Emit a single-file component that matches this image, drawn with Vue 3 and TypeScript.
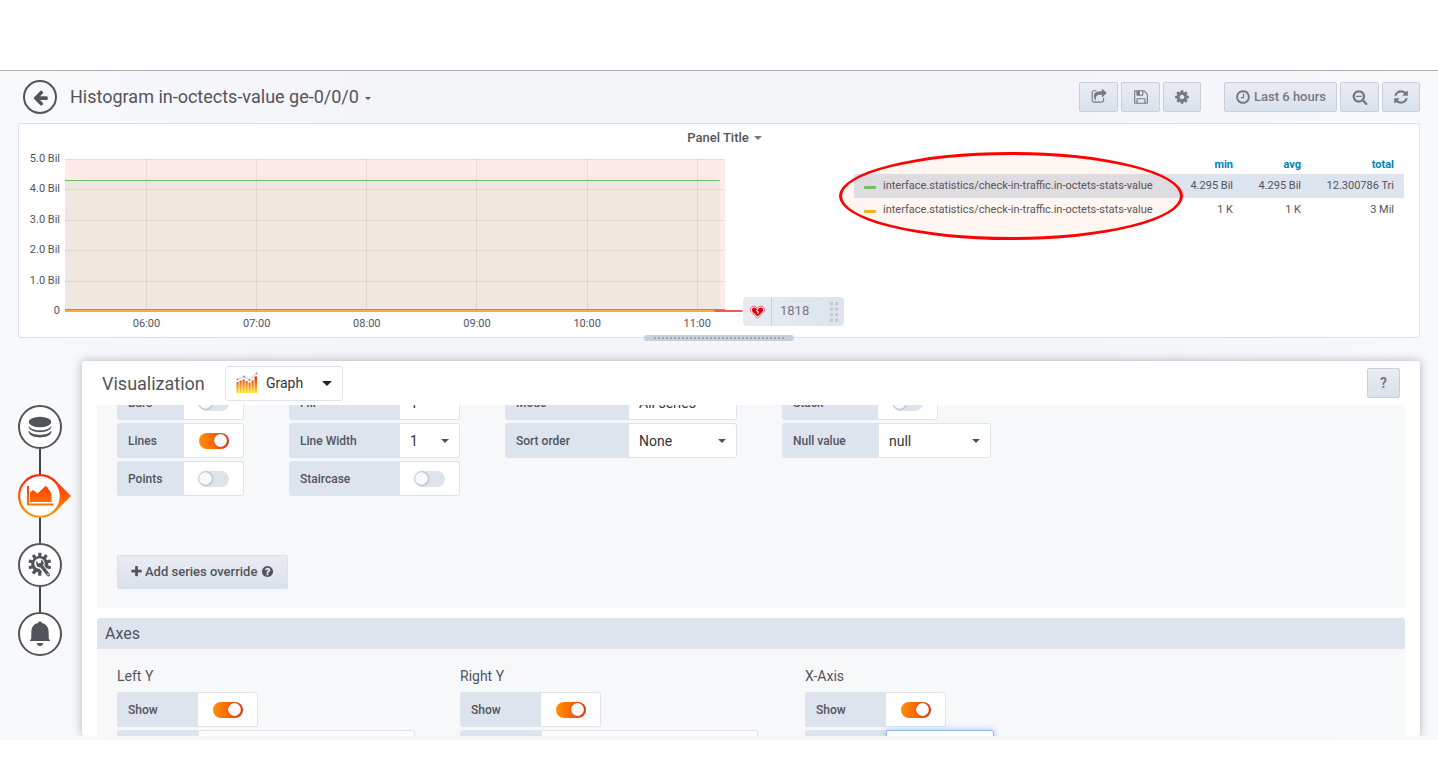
<script setup lang="ts">
import { ref } from 'vue'

interface Series {
  name: string
  color: string
  min: string
  avg: string
  total: string
  active: boolean
}

const series: Series[] = [
  { name: 'interface.statistics/check-in-traffic.in-octets-stats-value', color: '#73bf69', min: '4.295 Bil', avg: '4.295 Bil', total: '12.300786 Tri', active: true },
  { name: 'interface.statistics/check-in-traffic.in-octets-stats-value', color: '#f2b71f', min: '1 K', avg: '1 K', total: '3 Mil', active: false },
]

const yTicks = [
  { label: '5.0 Bil', y: 0 },
  { label: '4.0 Bil', y: 30 },
  { label: '3.0 Bil', y: 61 },
  { label: '2.0 Bil', y: 91 },
  { label: '1.0 Bil', y: 122 },
  { label: '0', y: 152 },
]

const xTicks = ['06:00', '07:00', '08:00', '09:00', '10:00', '11:00'].map((label, i) => ({
  label,
  x: `${(12.35 + i * 16.69).toFixed(2)}%`,
}))

const bars = ref(false)
const lines = ref(true)
const points = ref(false)
const staircase = ref(false)
const stack = ref(false)
const fill = ref('1')
const lineWidth = ref('1')
const hoverMode = ref('All series')
const sortOrder = ref('None')
const nullValue = ref('null')
const leftShow = ref(true)
const rightShow = ref(true)
const xShow = ref(true)
const leftUnit = ref('short')
const rightUnit = ref('short')
const xMode = ref('Time')

const icons = {
  back: 'M1664 896v128q0 53-32.5 90.5t-84.5 37.5h-704l293 294q38 36 38 90t-38 90l-75 76q-37 37-90 37-52 0-91-37l-651-652q-37-37-37-90 0-52 37-91l651-650q38-38 91-38 52 0 90 38l75 74q38 38 38 91t-38 91l-293 293h704q52 0 84.5 37.5t32.5 90.5z',
  share: 'M1472 989v259q0 119-84.5 203.5t-203.5 84.5h-832q-119 0-203.5-84.5t-84.5-203.5v-832q0-119 84.5-203.5t203.5-84.5h255q13 0 22.5 9.5t9.5 22.5q0 27-26 32-77 26-133 60-10 4-16 4h-112q-66 0-113 47t-47 113v832q0 66 47 113t113 47h832q66 0 113-47t47-113v-214q0-19 18-29 28-13 54-37 16-16 35-8 21 9 21 29zm237-496l-384 384q-18 19-45 19-12 0-25-5-39-17-39-59v-192h-160q-323 0-438 131-119 137-74 473 3 23-20 34-8 2-12 2-16 0-26-13-10-14-21-31t-39.5-68.5-49.5-99.5-38.5-114-17.5-122q0-49 3.5-91t14-90 28-88 47-81.5 68.5-74 94.5-61.5 124.5-48.5 159.5-30.5 196.5-11h160v-192q0-42 39-59 13-5 25-5 26 0 45 19l384 384q19 19 19 45t-19 45z',
  save: 'M512 1536h768v-384h-768v384zm896 0h128v-896q0-14-10-38.5t-20-34.5l-281-281q-10-10-34-20t-39-10v416q0 40-28 68t-68 28h-576q-40 0-68-28t-28-68v-416h-128v1280h128v-416q0-40 28-68t68-28h832q40 0 68 28t28 68v416zm-384-928v-320q0-13-9.5-22.5t-22.5-9.5h-192q-13 0-22.5 9.5t-9.5 22.5v320q0 13 9.5 22.5t22.5 9.5h192q13 0 22.5-9.5t9.5-22.5zm640 32v928q0 40-28 68t-68 28h-1344q-40 0-68-28t-28-68v-1344q0-40 28-68t68-28h928q40 0 88 20t76 48l280 280q28 28 48 76t20 88z',
  cog: 'M1152 896q0-106-75-181t-181-75-181 75-75 181 75 181 181 75 181-75 75-181zm512-109v222q0 12-8 23t-20 13l-185 28q-19 54-39 91 35 50 107 138 10 12 10 25t-9 23q-27 37-99 108t-94 71q-12 0-26-9l-138-108q-44 23-91 38-16 136-29 186-7 28-36 28h-222q-14 0-24.5-8.5t-11.5-21.5l-28-184q-49-16-90-37l-141 107q-10 9-25 9-14 0-25-11-126-114-165-168-7-10-7-23 0-12 8-23 15-21 51-66.5t54-70.5q-27-50-41-99l-183-27q-13-2-21-12.5t-8-23.5v-222q0-12 8-23t19-13l186-28q14-46 39-92-40-57-107-138-10-12-10-24 0-10 9-23 26-36 98.5-107.5t94.5-71.5q13 0 26 10l138 107q44-23 91-38 16-136 29-186 7-28 36-28h222q14 0 24.5 8.5t11.5 21.5l28 184q49 16 90 37l142-107q9-9 24-9 13 0 25 10 129 119 165 170 7 8 7 22 0 12-8 23-15 21-51 66.5t-54 70.5q26 50 41 98l183 28q13 2 21 12.5t8 23.5z',
  clock: 'M1024 544v448q0 14-9 23t-23 9h-320q-14 0-23-9t-9-23v-64q0-14 9-23t23-9h224v-352q0-14 9-23t23-9h64q14 0 23 9t9 23zm416 352q0-148-73-273t-198-198-273-73-273 73-198 198-73 273 73 273 198 198 273 73 273-73 198-198 73-273zm224 0q0 209-103 385.5t-279.5 279.5-385.5 103-385.5-103-279.5-279.5-103-385.5 103-385.5 279.5-279.5 385.5-103 385.5 103 279.5 279.5 103 385.5z',
  zoomOut: 'M1088 800v64q0 13-9.5 22.5t-22.5 9.5h-576q-13 0-22.5-9.5t-9.5-22.5v-64q0-13 9.5-22.5t22.5-9.5h576q13 0 22.5 9.5t9.5 22.5zm128 32q0-185-131.5-316.5t-316.5-131.5-316.5 131.5-131.5 316.5 131.5 316.5 316.5 131.5 316.5-131.5 131.5-316.5zm512 832q0 53-37.5 90.5t-90.5 37.5q-54 0-90-38l-343-342q-179 124-399 124-143 0-273.5-55.5t-225-150-150-225-55.5-273.5 55.5-273.5 150-225 225-150 273.5-55.5 273.5 55.5 225 150 150 225 55.5 273.5q0 220-124 399l343 343q37 37 37 90z',
  refresh: 'M1639 1056q0 5-1 7-64 268-268 434.5t-478 166.5q-146 0-282.5-55t-243.5-157l-129 129q-19 19-45 19t-45-19-19-45v-448q0-26 19-45t45-19h448q26 0 45 19t19 45-19 45l-137 137q71 66 161 102t187 36q134 0 250-65t186-179q11-17 53-117 8-23 30-23h192q13 0 22.5 9.5t9.5 22.5zm25-800v448q0 26-19 45t-45 19h-448q-26 0-45-19t-19-45 19-45l138-138q-148-137-349-137-134 0-250 65t-186 179q-11 17-53 117-8 23-30 23h-199q-13 0-22.5-9.5t-9.5-22.5v-7q65-268 270-434.5t480-166.5q146 0 284 55.5t245 156.5l130-129q19-19 45-19t45 19 19 45z',
  plus: 'M1600 736v192q0 40-28 68t-68 28h-416v416q0 40-28 68t-68 28h-192q-40 0-68-28t-28-68v-416h-416q-40 0-68-28t-28-68v-192q0-40 28-68t68-28h416v-416q0-40 28-68t68-28h192q40 0 68 28t28 68v416h416q40 0 68 28t28 68z',
  help: 'M1024 1376v-192q0-14-9-23t-23-9h-192q-14 0-23 9t-9 23v192q0 14 9 23t23 9h192q14 0 23-9t9-23zm256-672q0-88-55.5-163t-138.5-116-170-41q-243 0-371 213-15 24 8 42l132 100q7 6 19 6 16 0 25-12 53-68 86-92 34-24 86-24 48 0 85.5 26t37.5 59q0 38-20 61t-68 45q-63 28-115.5 86.5t-52.5 125.5v36q0 14 9 23t23 9h192q14 0 23-9t9-23q0-19 21.5-49.5t54.5-49.5q32-18 49-28.5t46-35 44.5-48 28-60.5 12.5-81zm384 192q0 209-103 385.5t-279.5 279.5-385.5 103-385.5-103-279.5-279.5-103-385.5 103-385.5 279.5-279.5 385.5-103 385.5 103 279.5 279.5 103 385.5z',
}

const gearTeeth = Array.from({ length: 10 }, (_, i) => i * 36)
</script>

<template>
  <div class="page">
    <div class="app">
      <header class="navbar">
        <button class="back" type="button" aria-label="Go back">
          <svg width="17" height="17" viewBox="0 0 1792 1792"><path :d="icons.back" /></svg>
        </button>
        <button class="dash-title" type="button">
          Histogram in-octects-value ge-0/0/0
          <span class="caret small"></span>
        </button>
        <div class="nav-buttons">
          <div class="btn-group">
            <button class="nav-btn" type="button" aria-label="Share dashboard"><svg width="16" height="16" viewBox="0 0 1792 1792"><path :d="icons.share" /></svg></button>
            <button class="nav-btn" type="button" aria-label="Save dashboard"><svg width="16" height="16" viewBox="0 0 1792 1792"><path :d="icons.save" /></svg></button>
            <button class="nav-btn" type="button" aria-label="Dashboard settings"><svg width="16" height="16" viewBox="0 0 1792 1792"><path :d="icons.cog" /></svg></button>
          </div>
          <div class="btn-group">
            <button class="nav-btn time" type="button"><svg width="16" height="16" viewBox="0 0 1792 1792"><path :d="icons.clock" /></svg>Last 6 hours</button>
            <button class="nav-btn" type="button" aria-label="Zoom out"><svg width="16" height="16" viewBox="0 0 1792 1792"><path :d="icons.zoomOut" /></svg></button>
            <button class="nav-btn" type="button" aria-label="Refresh"><svg width="16" height="16" viewBox="0 0 1792 1792"><path :d="icons.refresh" /></svg></button>
          </div>
        </div>
      </header>

      <section class="panel">
        <button class="panel-title" type="button">Panel Title<span class="caret grey"></span></button>
        <div class="panel-body">
          <div class="graph">
            <svg class="plot" role="img" aria-label="Octets over time">
              <rect x="0" y="0" width="100%" height="152" fill="#ffeaea" />
              <rect x="0" y="22" width="99.2%" height="130" fill="#f0e7de" />
              <g class="grid">
                <line v-for="t in yTicks.slice(0, 5)" :key="t.label" x1="0" x2="100%" :y1="t.y" :y2="t.y" />
                <line v-for="t in xTicks" :key="t.label" :x1="t.x" :x2="t.x" y1="0" y2="152" />
              </g>
              <rect x="0" y="21" width="99.2%" height="1" fill="#6cbf66" />
              <rect x="0" y="150" width="100%" height="1" fill="#f2703c" />
              <rect x="0" y="151" width="100%" height="2" fill="#f9ab3c" />
              <rect x="98.4%" y="151" width="28" height="2" fill="#f65a55" />
              <text v-for="t in yTicks" :key="t.label" x="-5" :y="t.y + 3" text-anchor="end">{{ t.label }}</text>
              <text v-for="t in xTicks" :key="t.label" :x="t.x" y="168" text-anchor="middle">{{ t.label }}</text>
            </svg>
            <div class="threshold">
              <span class="heart">
                <svg width="15" height="14" viewBox="0 0 15 14">
                  <path d="M7.5 13 1.6 7.4C-.3 5.4.4 2 3 1.3 5 .8 6.6 1.7 7.5 3.2 8.4 1.7 10 .8 12 1.3c2.6.7 3.3 4.1 1.4 6.1z" fill="#fff" stroke="#e5606a" />
                  <path d="M7.5 11.600 2.700 7C1.300 5.500 1.800 3.100 3.600 2.600 5.200 2.200 6.600 3.200 7.500 4.800 8.400 3.200 9.800 2.200 11.400 2.600c1.800.5 2.300 2.900.9 4.400z" fill="#d8000f" />
                  <path d="M7.800 3.500 6.700 6.200l1.800.6-1 2.200" fill="none" stroke="#fff" />
                </svg>
              </span>
              <span class="threshold-value">1818</span>
              <svg class="grip" width="8" height="20" viewBox="0 0 8 20">
                <g fill="#c5c8cc">
                  <template v-for="r in [0, 1, 2, 3]" :key="r">
                    <rect x="0" :y="r * 5.6" width="3" height="3" />
                    <rect x="5" :y="r * 5.6" width="3" height="3" />
                  </template>
                </g>
              </svg>
            </div>
          </div>
          <div class="legend">
            <table>
              <thead>
                <tr><th class="name"></th><th>min</th><th>avg</th><th class="total">total</th></tr>
              </thead>
              <tbody>
                <tr v-for="(s, i) in series" :key="i" :class="{ active: s.active }">
                  <td class="name"><span class="swatch" :style="{ background: s.color }"></span>{{ s.name }}</td>
                  <td>{{ s.min }}</td>
                  <td>{{ s.avg }}</td>
                  <td class="total">{{ s.total }}</td>
                </tr>
              </tbody>
            </table>
            <div class="highlight"></div>
          </div>
        </div>
        <div class="resizer"><span></span></div>
      </section>

      <div class="editor">
        <nav class="tabs" aria-label="Panel editor">
          <button class="tab" type="button" aria-label="Queries">
            <svg width="24" height="24" viewBox="0 0 24 24" fill="#52545c">
              <ellipse cx="12" cy="7" rx="11.3" ry="5.2" />
              <path d="M.7 11c2 3.200 6 4.300 11.300 4.300S21.300 14.200 23.300 11v1.300c-1.300 3.400-6 4.900-11.300 4.900S2 15.700.7 12.300zM.7 15.500c2 3.200 6 4.300 11.300 4.300s9.300-1.100 11.300-4.300v2c-1.300 3.400-6 4.900-11.300 4.900S2 20.900.7 17.500z" />
            </svg>
          </button>
          <button class="tab active" type="button" aria-label="Visualization">
            <svg width="53" height="44" viewBox="0 0 53 44">
              <defs>
                <linearGradient id="hot" x1="0" y1="0" x2="0" y2="44" gradientUnits="userSpaceOnUse">
                  <stop offset="0" stop-color="#ff1f0a" />
                  <stop offset="1" stop-color="#ff9a00" />
                </linearGradient>
              </defs>
              <path d="M36 5 53 22 36 39z" fill="url(#hot)" />
              <circle cx="22" cy="22" r="20.900" fill="#fff" stroke="url(#hot)" stroke-width="2.200" />
              <path d="M9 12h2v17.500h24.500v2H9z" fill="url(#hot)" />
              <path d="M12 28v-9.500l3-2.500 4.500 3.500 8-7.500 1.500 1 4.500 6.500V28z" fill="url(#hot)" />
            </svg>
          </button>
          <button class="tab" type="button" aria-label="General">
            <svg width="24" height="26" viewBox="0 0 24 26">
              <g fill="#52545c">
                <rect v-for="a in gearTeeth" :key="a" x="10.200" y="0.800" width="3.200" height="5" rx="0.500" :transform="`rotate(${a} 11.800 12.300)`" />
                <circle cx="11.800" cy="12.300" r="8.400" />
              </g>
              <circle cx="11.500" cy="11.500" r="5.200" fill="#fff" />
              <path d="M13 14 20.800 23.800" stroke="#fff" stroke-width="5.600" />
              <path d="M12.300 12.500 20.300 22.800" stroke="#52545c" stroke-width="3.400" stroke-linecap="round" />
              <path d="M8.300 8.600v3.400a4 4 0 0 0 4 3.600l2.900-2.600a3.900 3.900 0 0 0-1.900-5.200l-.4 3.400-2.100.8z" fill="#52545c" />
              <circle cx="20" cy="22.400" r="0.800" fill="#fff" />
            </svg>
          </button>
          <button class="tab" type="button" aria-label="Alert">
            <svg width="22" height="26" viewBox="0 0 22 26" fill="#52545c">
              <path d="M11 .5c1 0 1.600.6 1.900 1.400 4.300.9 6.600 4.100 6.700 8.600l.2 7.300 1.200 1.400V20H1v-.8l1.200-1.400.2-7.300C2.500 6 4.800 2.800 9.100 1.900 9.400 1.100 10 .5 11 .5zM7.800 22h6.400c-.3 1.800-1.500 3-3.200 3s-2.900-1.200-3.200-3z" />
            </svg>
          </button>
        </nav>

        <main class="sheet">
          <div class="sheet-head">
            <h1>Visualization</h1>
            <button class="picker" type="button">
              <svg width="22" height="22" viewBox="0 0 22 22">
                <defs>
                  <linearGradient id="bar" x1="0" y1="4" x2="0" y2="21" gradientUnits="userSpaceOnUse">
                    <stop offset="0" stop-color="#e8201c" />
                    <stop offset="0.5" stop-color="#f58220" />
                    <stop offset="1" stop-color="#fde40a" />
                  </linearGradient>
                </defs>
                <g fill="url(#bar)">
                  <rect x="0.5" y="10" width="2.200" height="11" /><rect x="3.500" y="8.500" width="2.200" height="12.500" />
                  <rect x="6.500" y="7.500" width="2.200" height="13.500" /><rect x="9.500" y="9" width="2.200" height="12" />
                  <rect x="12.500" y="10.500" width="2.200" height="10.500" /><rect x="15.500" y="8.500" width="2.200" height="12.500" />
                  <rect x="18.500" y="4.500" width="2.500" height="16.500" />
                </g>
                <path d="M1.500 7.500 8 4.500l5.500 3.500L20.500 1.500" fill="none" stroke="#aaa" stroke-width="0.700" />
                <g fill="#888"><circle cx="1.500" cy="7.500" r="0.900" /><circle cx="8" cy="4.500" r="0.900" /><circle cx="13.500" cy="8" r="0.900" /><circle cx="20.500" cy="1.500" r="0.900" /></g>
              </svg>
              <span>Graph</span>
              <span class="caret big"></span>
            </button>
            <button class="nav-btn question" type="button">?</button>
          </div>

          <div class="scroll">
            <section class="options">
              <div class="columns">
                <div class="col">
                  <label class="field"><span class="lbl w67">Bars</span><span class="box"><input v-model="bars" type="checkbox" class="switch" /></span></label>
                  <label class="field"><span class="lbl w67">Lines</span><span class="box"><input v-model="lines" type="checkbox" class="switch" /></span></label>
                  <label class="field"><span class="lbl w67">Points</span><span class="box"><input v-model="points" type="checkbox" class="switch" /></span></label>
                </div>
                <div class="col">
                  <label class="field"><span class="lbl w111">Fill</span><span class="box sel"><select v-model="fill"><option>1</option></select></span></label>
                  <label class="field"><span class="lbl w111">Line Width</span><span class="box sel"><select v-model="lineWidth"><option>1</option></select></span></label>
                  <label class="field"><span class="lbl w111">Staircase</span><span class="box"><input v-model="staircase" type="checkbox" class="switch" /></span></label>
                </div>
                <div class="col">
                  <label class="field"><span class="lbl w124">Mode</span><span class="box sel w108"><select v-model="hoverMode"><option>All series</option></select></span></label>
                  <label class="field"><span class="lbl w124">Sort order</span><span class="box sel w108"><select v-model="sortOrder"><option>None</option></select></span></label>
                </div>
                <div class="col">
                  <label class="field"><span class="lbl w96">Stack</span><span class="box"><input v-model="stack" type="checkbox" class="switch" /></span></label>
                  <label class="field"><span class="lbl w97">Null value</span><span class="box sel w112"><select v-model="nullValue"><option>null</option></select></span></label>
                </div>
              </div>
              <button class="override" type="button">
                <svg width="13" height="13" viewBox="0 0 1792 1792"><path :d="icons.plus" /></svg>
                <span>Add series override</span>
                <svg width="13" height="13" viewBox="0 0 1792 1792"><path :d="icons.help" /></svg>
              </button>
            </section>

            <section class="axes">
              <h2>Axes</h2>
              <div class="columns axes-body">
                <div class="col axis">
                  <h3>Left Y</h3>
                  <label class="field"><span class="lbl w81">Show</span><span class="box"><input v-model="leftShow" type="checkbox" class="switch" /></span></label>
                  <label class="field"><span class="lbl w82">Unit</span><span class="box sel w216"><select v-model="leftUnit"><option>short</option></select></span></label>
                </div>
                <div class="col axis">
                  <h3>Right Y</h3>
                  <label class="field"><span class="lbl w81">Show</span><span class="box"><input v-model="rightShow" type="checkbox" class="switch" /></span></label>
                  <label class="field"><span class="lbl w82">Unit</span><span class="box sel w216"><select v-model="rightUnit"><option>short</option></select></span></label>
                </div>
                <div class="col">
                  <h3>X-Axis</h3>
                  <label class="field"><span class="lbl w81">Show</span><span class="box"><input v-model="xShow" type="checkbox" class="switch" /></span></label>
                  <label class="field"><span class="lbl w81">Mode</span><span class="box sel w108 focused"><select v-model="xMode"><option>Time</option></select></span></label>
                </div>
              </div>
            </section>
          </div>
        </main>
      </div>
    </div>
  </div>
</template>

<style>
body {
  margin: 0;
  background: #fff;
}
</style>

<style scoped>
.page,
.page * {
  box-sizing: border-box;
}
.page {
  display: flex;
  height: 100vh;
  padding: 70px 0 31px;
  font-family: Roboto, "Liberation Sans", sans-serif;
  font-size: 13px;
  color: #52545c;
}
button,
select {
  font: inherit;
  color: inherit;
}
button {
  padding: 0;
  border: 0;
  background: none;
  cursor: pointer;
}
svg {
  display: block;
  flex: none;
}
.app {
  display: flex;
  flex: 1;
  flex-direction: column;
  min-width: 0;
  padding: 0 18px 4px;
  overflow: hidden;
  border-top: 1px solid #b0b0b3;
  background: linear-gradient(90deg, #f8f9fb, #f4f5f9 25%, #f4f5f9 75%, #f8f9fb);
}
.caret {
  display: inline-block;
  border: 4px solid transparent;
  border-top-color: currentColor;
  border-bottom: 0;
}
.caret.small {
  border-width: 3px 3px 0;
}
.caret.big {
  border-width: 5px 5px 0;
}
.caret.grey {
  color: #767980;
}

/* top bar */
.navbar {
  display: flex;
  flex: none;
  align-items: center;
  height: 52px;
}
.back {
  display: flex;
  align-items: center;
  justify-content: center;
  width: 34px;
  height: 34px;
  margin: 0 13px 0 5px;
  border: 2px solid #52545c;
  border-radius: 50%;
  fill: #52545c;
}
.dash-title {
  display: flex;
  gap: 6px;
  align-items: center;
  padding-bottom: 2px;
  font-size: 18px;
}
.dash-title .caret {
  margin-top: 5px;
}
.nav-buttons {
  display: flex;
  gap: 23px;
  margin-left: auto;
}
.btn-group {
  display: flex;
  gap: 3px;
}
.nav-btn {
  display: flex;
  gap: 3px;
  align-items: center;
  justify-content: center;
  width: 39px;
  height: 30px;
  padding-bottom: 1px;
  border: 1px solid #c7d0d9;
  border-radius: 2px;
  background: linear-gradient(#e9edf2, #dae1eb);
  color: #767980;
  fill: #767980;
  font-weight: 500;
}
.nav-btn:last-child {
  width: 38px;
}
.nav-btn.time {
  width: 113px;
}

/* graph panel */
.panel {
  position: relative;
  display: flex;
  flex: none;
  flex-direction: column;
  border: 1px solid #dae3ec;
  border-radius: 3px;
  background: #fff;
}
.panel-title {
  display: flex;
  gap: 5px;
  align-items: center;
  justify-content: center;
  height: 27px;
  padding-left: 11px;
  font-weight: 500;
}
.panel-body {
  display: flex;
  padding: 3px 15px 6px 0;
}
.graph {
  position: relative;
  flex: 1;
  min-width: 0;
  margin: 5px 129px 0 46px;
}
.plot {
  width: 100%;
  height: 172px;
  overflow: visible;
}
.plot text {
  fill: #52545c;
  font-size: 11px;
}
.grid line {
  stroke: rgba(0, 0, 0, 0.07);
  stroke-width: 1;
  shape-rendering: crispEdges;
}
.threshold {
  position: absolute;
  top: 138px;
  left: calc(100% + 18px);
  display: flex;
  align-items: center;
  width: 101px;
  height: 29px;
  border-radius: 4px;
  background: linear-gradient(90deg, #e8ecf2, #dde4ed);
  color: #767980;
}
.heart {
  display: flex;
  align-items: center;
  justify-content: center;
  width: 29px;
  height: 27px;
  border-right: 1px solid #c7d0d9;
}
.threshold-value {
  flex: 1;
  padding: 0 0 2px 8px;
}
.grip {
  margin-right: 6px;
}
.legend {
  position: relative;
  flex: none;
  width: 550px;
}
table {
  width: 100%;
  border-collapse: collapse;
  table-layout: fixed;
  font-size: 11px;
}
th,
td {
  width: 68px;
  height: 24px;
  padding: 0 10px 2px 0;
  text-align: right;
  white-space: nowrap;
}
th {
  height: 20px;
  padding-bottom: 0;
  color: #0083b3;
  font-weight: 700;
}
.name {
  width: 321px;
  padding-left: 10px;
  text-align: left;
}
.total {
  width: 93px;
}
tr.active {
  background: #dde4ed;
}
.swatch {
  display: inline-block;
  width: 12px;
  height: 3px;
  margin-right: 7px;
  border-radius: 1px;
}
.highlight {
  position: absolute;
  top: -2px;
  left: -15px;
  width: 344px;
  height: 88px;
  border: 3px solid #f00;
  border-radius: 50%;
  background: rgba(255, 75, 0, 0.05);
  pointer-events: none;
}
.resizer {
  position: absolute;
  bottom: -4px;
  left: 50%;
  display: flex;
  align-items: center;
  width: 150px;
  height: 6px;
  margin-left: -75px;
  padding: 0 10px;
  border-radius: 3px;
  background: #c7d0d9;
}
.resizer span {
  flex: 1;
  border-top: 2px dotted #9fa7b3;
}

/* editor */
.editor {
  display: flex;
  flex: 1;
  min-height: 0;
  margin-top: 23px;
}
.tabs {
  display: flex;
  flex: none;
  flex-direction: column;
  gap: 25px;
  width: 64px;
  padding-top: 44px;
}
.tab {
  position: relative;
  display: flex;
  flex: none;
  align-items: center;
  justify-content: center;
  width: 44px;
  height: 44px;
  border: 2px solid #52545c;
  border-radius: 50%;
  background: #fff;
}
.tab.active {
  justify-content: flex-start;
  border: 0;
  background: none;
}
.tab + .tab::before {
  position: absolute;
  bottom: 100%;
  left: 50%;
  width: 2px;
  height: 25px;
  margin-left: -1px;
  background: #43454d;
  content: "";
}
.tab:not(.active)::before {
  margin-bottom: 2px;
}
.sheet {
  display: flex;
  flex: 1;
  flex-direction: column;
  min-width: 0;
  padding: 0 15px;
  border-radius: 3px;
  background: #fff;
  box-shadow: 0 0 10px rgba(95, 108, 122, 0.5);
  clip-path: inset(-20px -20px 0 -20px);
}
.sheet-head {
  display: flex;
  flex: none;
  align-items: center;
  height: 44px;
  padding: 0 5px;
}
h1,
h2,
h3 {
  margin: 0;
  font-weight: 400;
}
h1 {
  width: 123px;
  font-size: 18px;
}
.picker {
  display: flex;
  align-items: center;
  width: 118px;
  height: 35px;
  padding: 0 10px;
  border: 1px solid #dde4ed;
  border-radius: 3px;
  background: #fff;
  color: #333;
  font-size: 14px;
}
.picker span:not(.caret) {
  padding-left: 8px;
}
.picker .caret {
  margin-left: auto;
  color: #222;
}
.nav-btn.question {
  width: 33px;
  margin-left: auto;
  padding-bottom: 0;
  font-weight: 700;
  font-size: 14px;
}
.scroll {
  flex: 1;
  min-height: 0;
  overflow: hidden;
}
.options {
  margin-top: -20px;
  padding: 0 20px 19px;
  border-radius: 3px;
  background: #f7f8fa;
}
.columns {
  display: flex;
  gap: 45px;
}
.col {
  display: flex;
  flex-direction: column;
  gap: 3px;
}
.axis {
  width: 298px;
}
.axis + .axis {
  width: 300px;
}
.field {
  display: flex;
  height: 35px;
}
.lbl {
  display: flex;
  flex: none;
  align-items: center;
  padding-left: 11px;
  border-radius: 3px 0 0 3px;
  background: #dde4ed;
  font-size: 12px;
  font-weight: 500;
}
.w67 { width: 67px; }
.w81 { width: 81px; }
.w82 { width: 82px; }
.w96 { width: 96px; }
.w97 { width: 97px; }
.w111 { width: 111px; }
.w124 { width: 124px; }
.box {
  position: relative;
  display: flex;
  flex: none;
  align-items: center;
  justify-content: center;
  width: 60px;
  border: 1px solid #dde4ed;
  border-left-width: 0;
  border-radius: 0 3px 3px 0;
  background: #fff;
}
.box.w108 { width: 108px; }
.box.w112 { width: 112px; }
.box.w216 { width: 216px; }
.box.focused {
  border: 1px solid #8fb8f6;
  box-shadow: 0 0 6px #9cc2fb;
}
.sel::after {
  position: absolute;
  right: 10px;
  border: 4px solid transparent;
  border-top-color: #52545c;
  border-bottom: 0;
  content: "";
  pointer-events: none;
}
select {
  width: 100%;
  height: 100%;
  padding: 0 20px 0 10px;
  border: 0;
  outline: 0;
  background: none;
  color: #333;
  font-size: 14px;
  appearance: none;
}
.switch {
  display: flex;
  align-items: center;
  width: 30px;
  height: 16px;
  margin: 0;
  border-radius: 8px;
  background: #dde4ed;
  appearance: none;
}
.switch::before {
  width: 13px;
  height: 13px;
  border-radius: 50%;
  background: #f7f8fa;
  box-shadow: 0 0 2px rgba(60, 70, 90, 0.8);
  content: "";
}
.switch:checked {
  background: linear-gradient(90deg, #ff9000, #ff7000 40%, #e0380c);
}
.switch:checked::before {
  margin-left: 15px;
  box-shadow: 0 0 1px #a02000;
}
.override {
  display: flex;
  align-items: center;
  height: 34px;
  margin-top: 59px;
  padding: 0 13px 2px 12px;
  border: 1px solid #dae1ea;
  border-radius: 2px;
  background: linear-gradient(#e9edf2, #dae1eb);
  fill: #52545c;
  font-weight: 500;
}
.override span {
  padding: 0 4px 0 2px;
}
.axes {
  margin-top: 10px;
}
h2 {
  height: 31px;
  padding-left: 8px;
  border-radius: 3px 3px 0 0;
  background: #dde4ed;
  font-size: 16px;
  line-height: 31px;
}
.axes-body {
  padding: 16px 20px;
  background: #f7f8fa;
}
h3 {
  height: 24px;
  font-size: 14px;
  line-height: 22px;
}
</style>
